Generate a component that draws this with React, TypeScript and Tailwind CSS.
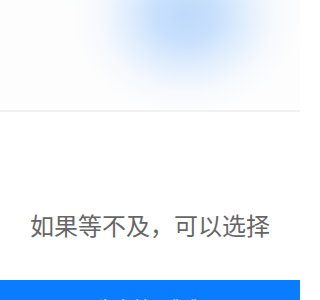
export default function App() {
  return (
    <div className="w-[300px] h-[300px] overflow-hidden bg-white flex flex-col" style={{ fontFamily: '"Noto Sans CJK SC", "Noto Sans", sans-serif' }}>
      <div
        className="h-[110px] shrink-0 bg-[#fdfdfd]"
        style={{
          backgroundImage:
            'radial-gradient(ellipse 115px 100px at 186px 15px, rgba(190,218,251,1) 0%, rgba(196,222,252,0.95) 25%, rgba(214,232,253,0.75) 50%, rgba(236,244,254,0.45) 75%, rgba(253,253,253,0) 100%)',
        }}
      />
      <div className="h-[2px] shrink-0 bg-[#f1f1f1]" />
      <div className="h-[168px] shrink-0 flex items-center justify-center pt-[58px]">
        <span className="text-[24px] leading-[32px] text-[#666666]">如果等不及，可以选择</span>
      </div>
      <div className="h-[60px] shrink-0 bg-[#0a7cff] flex justify-center pt-[14px]">
        <span className="text-[18px] leading-[26px] text-white">先去首页逛逛</span>
      </div>
    </div>
  );
}
